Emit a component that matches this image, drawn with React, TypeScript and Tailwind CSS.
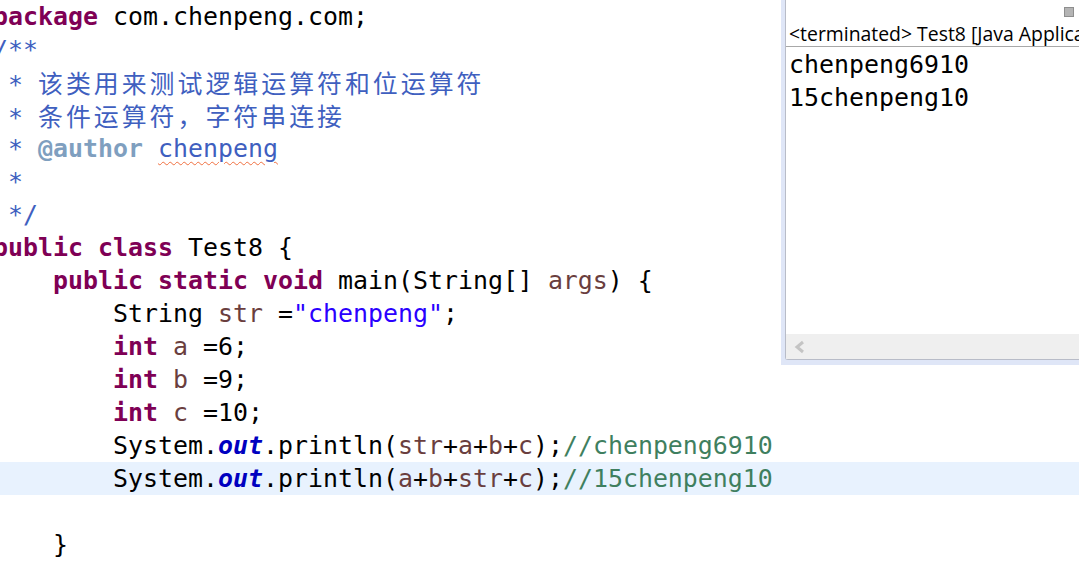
import React from 'react';

const kw = 'font-bold text-[#7f0055]';
const cm = 'text-[#3f5fbf]';
const loc = 'text-[#6a3e3e]';
const cjk = "font-['Noto_Sans_CJK_SC',sans-serif] tracking-[3px]";

const Line: React.FC<{ children?: React.ReactNode; active?: boolean }> = ({ children, active }) => (
  <div className={`h-[33px] leading-[33px] whitespace-pre ${active ? 'bg-[#e8f2fe]' : ''}`}>
    <div className="-ml-[7px]">{children ?? ' '}</div>
  </div>
);

const Out = () => <span className="font-bold italic text-[#0000c0]">out</span>;

export default function App() {
  return (
    <div className="relative w-[1079px] h-[565px] overflow-hidden bg-white text-black font-['DejaVu_Sans_Mono',monospace] text-[24.92px]">
      {/* Editor */}
      <div className="flex flex-col">
        <Line>
          <span className={kw}>package</span> com.chenpeng.com;
        </Line>
        <Line>
          <span className={cm}>/**</span>
        </Line>
        <Line>
          <span className={cm}>
            {' * '}
            <span className={cjk}>该类用来测试逻辑运算符和位运算符</span>
          </span>
        </Line>
        <Line>
          <span className={cm}>
            {' * '}
            <span className={cjk}>条件运算符，字符串连接</span>
          </span>
        </Line>
        <Line>
          <span className={cm}>
            {' * '}
            <span className="font-bold text-[#7f9fbf]">@author</span>{' '}
            <span className="underline decoration-wavy decoration-[#f07040] decoration-1 underline-offset-4">chenpeng</span>
          </span>
        </Line>
        <Line>
          <span className={cm}>{' *'}</span>
        </Line>
        <Line>
          <span className={cm}>{' */'}</span>
        </Line>
        <Line>
          <span className={kw}>public</span> <span className={kw}>class</span> Test8 {'{'}
        </Line>
        <Line>
          {'    '}
          <span className={kw}>public</span> <span className={kw}>static</span> <span className={kw}>void</span> main(String[]{' '}
          <span className={loc}>args</span>) {'{'}
        </Line>
        <Line>
          {'        '}String <span className={loc}>str</span> =<span className="text-[#2a00ff]">"chenpeng"</span>;
        </Line>
        <Line>
          {'        '}
          <span className={kw}>int</span> <span className={loc}>a</span> =6;
        </Line>
        <Line>
          {'        '}
          <span className={kw}>int</span> <span className={loc}>b</span> =9;
        </Line>
        <Line>
          {'        '}
          <span className={kw}>int</span> <span className={loc}>c</span> =10;
        </Line>
        <Line>
          {'        '}System.<Out />.println(<span className={loc}>str</span>+<span className={loc}>a</span>+
          <span className={loc}>b</span>+<span className={loc}>c</span>);
          <span className="text-[#3f7f5f]">//chenpeng6910</span>
        </Line>
        <Line active>
          {'        '}System.<Out />.println(<span className={loc}>a</span>+<span className={loc}>b</span>+
          <span className={loc}>str</span>+<span className={loc}>c</span>);
          <span className="text-[#3f7f5f]">//15chenpeng10</span>
        </Line>
        <Line />
        <Line>{'    }'}</Line>
      </div>

      {/* Console view */}
      <div className="absolute top-0 left-[781px] w-[298px] h-[365px] bg-[#dfe6f7] pl-[4px] pb-[5px]">
        <div className="flex flex-col h-full bg-white border-l border-b border-[#b8bcc8] rounded-bl-[3px]">
          <div className="relative h-[47px] border-b border-[#a8a8a8]">
            <div className="absolute top-[7px] right-[5px] w-[10px] h-[10px] bg-[#b4b4b4] border border-[#8e8e8e]" />
            <div className="absolute left-[3px] top-[21px] whitespace-nowrap font-['Open_Sans',sans-serif] text-[19.4px] leading-[26px] text-black">
              {'<terminated> Test8 [Java Application]'}
            </div>
          </div>
          <div className="flex-1 pl-[3px] pt-[1px]">
            <div className="h-[33px] leading-[33px]">chenpeng6910</div>
            <div className="h-[33px] leading-[33px]">15chenpeng10</div>
          </div>
          <div className="h-[25px] bg-[#efefef] flex items-center pl-[8px]">
            <svg width="12" height="14" viewBox="0 0 12 14">
              <path d="M9 2 L3 7 L9 12" fill="none" stroke="#c4c4c4" strokeWidth="3" />
            </svg>
          </div>
        </div>
      </div>
    </div>
  );
}
